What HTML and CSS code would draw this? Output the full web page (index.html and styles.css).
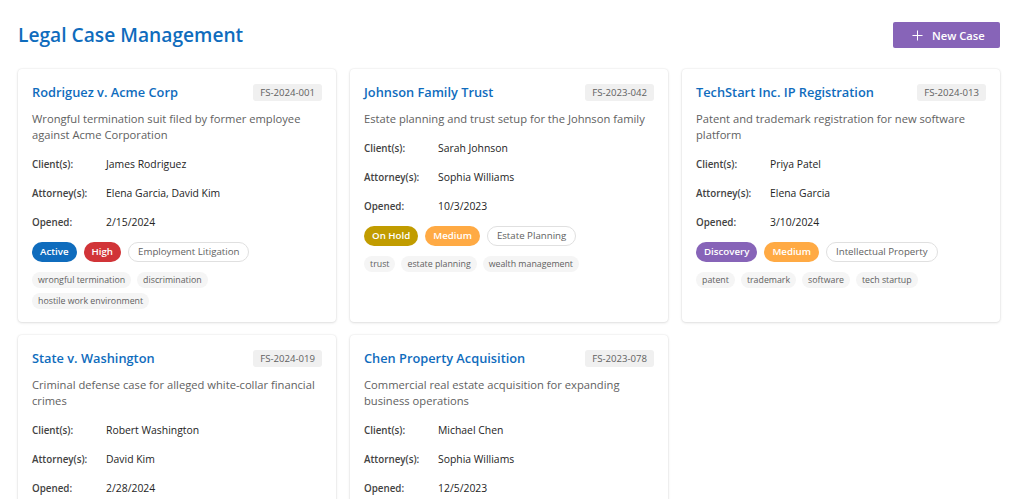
FILE: index.html
```html
<!DOCTYPE html>
<html lang="en">
<head>
<meta charset="utf-8">
<title>Legal Case Management</title>
<link rel="stylesheet" href="styles.css">
</head>
<body>
<div class="page">
  <header class="page-header">
    <h1 class="page-title">Legal Case Management</h1>
    <button class="new-btn" type="button">
      <svg class="plus" viewBox="0 0 12 12" width="11" height="11" aria-hidden="true"><path d="M6 0.5v11M0.5 6h11" stroke="currentColor" stroke-width="1.1" fill="none"/></svg>
      <span>New Case</span>
    </button>
  </header>

  <main class="grid">
    <article class="card">
      <div class="card-head"><h2 class="card-title">Rodriguez v. Acme Corp</h2><span class="case-no">FS-2024-001</span></div>
      <p class="desc">Wrongful termination suit filed by former employee against Acme Corporation</p>
      <dl class="info">
        <div class="row"><dt>Client(s):</dt><dd>James Rodriguez</dd></div>
        <div class="row"><dt>Attorney(s):</dt><dd>Elena Garcia, David Kim</dd></div>
        <div class="row"><dt>Opened:</dt><dd>2/15/2024</dd></div>
      </dl>
      <div class="badges"><span class="pill active">Active</span><span class="pill high">High</span><span class="pill outline">Employment Litigation</span></div>
      <div class="tags"><span class="tag">wrongful termination</span><span class="tag">discrimination</span><span class="tag">hostile work environment</span></div>
    </article>

    <article class="card">
      <div class="card-head"><h2 class="card-title">Johnson Family Trust</h2><span class="case-no">FS-2023-042</span></div>
      <p class="desc">Estate planning and trust setup for the Johnson family</p>
      <dl class="info">
        <div class="row"><dt>Client(s):</dt><dd>Sarah Johnson</dd></div>
        <div class="row"><dt>Attorney(s):</dt><dd>Sophia Williams</dd></div>
        <div class="row"><dt>Opened:</dt><dd>10/3/2023</dd></div>
      </dl>
      <div class="badges"><span class="pill hold">On Hold</span><span class="pill medium">Medium</span><span class="pill outline">Estate Planning</span></div>
      <div class="tags"><span class="tag">trust</span><span class="tag">estate planning</span><span class="tag">wealth management</span></div>
    </article>

    <article class="card">
      <div class="card-head"><h2 class="card-title">TechStart Inc. IP Registration</h2><span class="case-no">FS-2024-013</span></div>
      <p class="desc">Patent and trademark registration for new software platform</p>
      <dl class="info">
        <div class="row"><dt>Client(s):</dt><dd>Priya Patel</dd></div>
        <div class="row"><dt>Attorney(s):</dt><dd>Elena Garcia</dd></div>
        <div class="row"><dt>Opened:</dt><dd>3/10/2024</dd></div>
      </dl>
      <div class="badges"><span class="pill discovery">Discovery</span><span class="pill medium">Medium</span><span class="pill outline">Intellectual Property</span></div>
      <div class="tags"><span class="tag">patent</span><span class="tag">trademark</span><span class="tag">software</span><span class="tag">tech startup</span></div>
    </article>

    <article class="card">
      <div class="card-head"><h2 class="card-title">State v. Washington</h2><span class="case-no">FS-2024-019</span></div>
      <p class="desc">Criminal defense case for alleged white-collar financial crimes</p>
      <dl class="info">
        <div class="row"><dt>Client(s):</dt><dd>Robert Washington</dd></div>
        <div class="row"><dt>Attorney(s):</dt><dd>David Kim</dd></div>
        <div class="row"><dt>Opened:</dt><dd>2/28/2024</dd></div>
      </dl>
      <div class="badges"><span class="pill active">Active</span><span class="pill high">High</span><span class="pill outline">Criminal Defense</span></div>
      <div class="tags"><span class="tag">white collar</span><span class="tag">fraud</span></div>
    </article>

    <article class="card">
      <div class="card-head"><h2 class="card-title">Chen Property Acquisition</h2><span class="case-no">FS-2023-078</span></div>
      <p class="desc">Commercial real estate acquisition for expanding business operations</p>
      <dl class="info">
        <div class="row"><dt>Client(s):</dt><dd>Michael Chen</dd></div>
        <div class="row"><dt>Attorney(s):</dt><dd>Sophia Williams</dd></div>
        <div class="row"><dt>Opened:</dt><dd>12/5/2023</dd></div>
      </dl>
      <div class="badges"><span class="pill active">Active</span><span class="pill medium">Medium</span><span class="pill outline">Real Estate</span></div>
      <div class="tags"><span class="tag">commercial</span><span class="tag">acquisition</span></div>
    </article>
  </main>
</div>
</body>
</html>
```

FILE: styles.css
```css
* { box-sizing: border-box; }

html, body {
  margin: 0;
  padding: 0;
  background: #ffffff;
}

body {
  font-family: "Segoe UI", "Open Sans", "Noto Sans", sans-serif;
  color: #242424;
}

.page {
  padding: 22px 23px 20px 18px;
}

.page-header {
  display: flex;
  align-items: center;
  justify-content: space-between;
  height: 26px;
  margin-bottom: 21px;
}

.page-title {
  margin: 0;
  font-size: 19.2px;
  font-weight: 600;
  color: #0f6cbd;
  line-height: 26px;
}

.new-btn {
  display: flex;
  align-items: center;
  gap: 9px;
  height: 26px;
  width: 107px;
  padding: 0 0 0 19px;
  border: none;
  border-radius: 2px;
  background: #8764b8;
  color: #ffffff;
  font-family: inherit;
  font-size: 11.2px;
  font-weight: 600;
}

.plus { display: block; }

.grid {
  display: grid;
  grid-template-columns: repeat(3, 1fr);
  gap: 13px 14px;
}

.card {
  background: #ffffff;
  border-radius: 4px;
  box-shadow: 0 0 2px rgba(0,0,0,0.12), 0 1px 3px rgba(0,0,0,0.10);
  padding: 13px 14px 13px 14px;
  display: flex;
  flex-direction: column;
}

.card-head {
  display: flex;
  align-items: center;
  justify-content: space-between;
  height: 20px;
  margin-bottom: 9px;
}

.card-title {
  margin: 0;
  font-size: 12.8px;
  font-weight: 600;
  color: #0f6cbd;
  line-height: 20px;
}

.case-no {
  background: #f0f0f0;
  color: #616161;
  font-size: 9.6px;
  line-height: 17px;
  height: 17px;
  padding: 0 7px;
  border-radius: 3px;
}

.desc {
  margin: 0 0 11px 0;
  font-size: 11.2px;
  line-height: 16px;
  color: #616161;
}

.info {
  margin: 0 0 10px 0;
  display: flex;
  flex-direction: column;
  gap: 9px;
}

.row {
  display: flex;
  height: 20px;
  align-items: center;
}

.row dt {
  width: 74px;
  font-size: 9.8px;
  font-weight: 600;
  color: #424242;
}

.row dd {
  margin: 0;
  font-size: 10.4px;
  color: #242424;
}

.badges {
  display: flex;
  flex-wrap: wrap;
  gap: 7px;
  margin-bottom: 10px;
}

.pill {
  height: 20px;
  line-height: 20px;
  border-radius: 10px;
  padding: 0 8px;
  font-size: 9.7px;
  font-weight: 600;
  color: #ffffff;
}

.pill.active { background: #0f6cbd; }
.pill.high { background: #d13438; }
.pill.hold { background: #c19c00; }
.pill.medium { background: #ffaa44; }
.pill.discovery { background: #8764b8; }

.pill.outline {
  background: #ffffff;
  border: 1px solid #e0e0e0;
  line-height: 18px;
  padding: 0 9px;
  color: #616161;
  font-weight: 400;
}

.tags {
  display: flex;
  flex-wrap: wrap;
  gap: 5px 6px;
}

.tag {
  height: 16px;
  line-height: 16px;
  padding: 0 6px;
  border-radius: 8px;
  background: #f5f5f5;
  color: #616161;
  font-size: 8.8px;
}
```
